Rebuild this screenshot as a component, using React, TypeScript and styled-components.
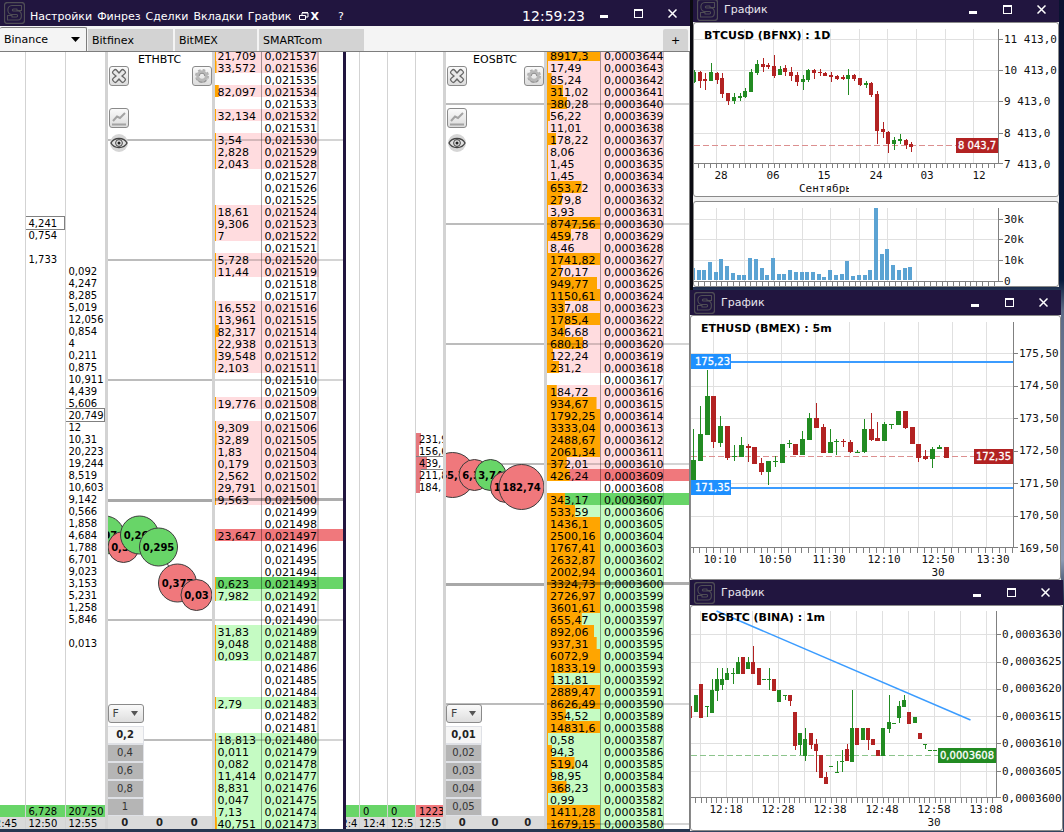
import React from "react";
import styled, { createGlobalStyle } from "styled-components";

const sans = `"DejaVu Sans", Verdana, sans-serif`;
const mono = `"DejaVu Sans Mono", monospace`;
const navy = "#21153f";
const up = "#228b22";
const down = "#b22222";

const GlobalStyle = createGlobalStyle`
  * { box-sizing: border-box; }
  body { margin: 0; background: #1d2c48; font-family: ${sans}; font-size: 11px; color: #000; }
  button, select { font: inherit; color: inherit; margin: 0; padding: 0; border: 0; background: none; }
  table { border-collapse: collapse; }
`;

/* ---------- desktop and windows ---------- */

const Desktop = styled.main`
  display: flex;
  align-items: flex-start;
  min-height: 100vh;
  overflow: hidden;
  background: linear-gradient(#0a1230 0, #071a3c 280px, #5d6b86 310px, #8e9bb4 560px, #1d2c48 600px, #33445f 830px);
`;

const MainWindow = styled.section`
  flex: 690 1 0;
  min-width: 0;
  background: #fff;
  box-shadow: 0 3px 0 #263650;
`;

const ChartColumn = styled.div`
  flex: 374 1 0;
  min-width: 0;
  display: flex;
  flex-direction: column;
  background: linear-gradient(90deg, #0b0b12 0 3px, transparent 3px);
`;

const ChartWindow = styled.section<{ $margin: string }>`
  margin: ${(p) => p.$margin};
  background: #f0f0f0;
`;

const TitleBar = styled.header<{ $height: number }>`
  display: flex;
  align-items: center;
  height: ${(p) => p.$height}px;
  padding: 0 1px 0 4px;
  background: ${navy};
  color: #e8e6ee;
  overflow: hidden;
`;

const WindowTitle = styled.h2`
  flex: 1;
  margin: 0 0 0 6px;
  font-size: 11px;
  font-weight: 400;
  line-height: 14px;
`;

const WindowButton = styled.button`
  flex: none;
  display: flex;
  align-items: center;
  justify-content: center;
  width: 34px;
  height: 22px;
`;

const Menu = styled.nav`
  flex: 1;
  display: flex;
  align-items: center;
  gap: 5px;
  margin-left: 5px;
  padding-top: 8px;
  color: #fff;
  white-space: nowrap;
`;

const MenuButton = styled.button<{ $bold?: boolean }>`
  line-height: 14px;
  font-weight: ${(p) => (p.$bold ? 700 : 400)};
`;

const MenuIcons = styled.span`
  display: flex;
  align-items: center;
  gap: 1px;
  margin: 0 14px 0 3px;
`;

const Clock = styled.time`
  margin-right: 2px;
  padding-top: 6px;
  font-size: 14px;
  line-height: 18px;
  color: #fff;
`;

function Logo() {
  return (
    <svg width="21" height="22" viewBox="0 0 21 22" fill="none" stroke="#504e56" aria-hidden="true">
      <rect x="0.5" y="0.5" width="20" height="21" rx="3" strokeWidth="1.300" />
      <path
        d="M17.5 8.5H13V7H9.5C8 7 8 9 9.500 9H14C18.500 9 18.500 18 14 18H3.500V13.500H8V15H12.500C14 15 14 12.500 12.500 12.500H8C2.500 12.500 2.500 3.500 8 3.500H17.500Z"
        strokeWidth="1.100"
        strokeLinejoin="round"
      />
    </svg>
  );
}

function WindowControls() {
  return (
    <>
      <WindowButton aria-label="Свернуть">
        <svg width="9" height="9"><rect y="6" width="8" height="3" fill="#fff" /></svg>
      </WindowButton>
      <WindowButton aria-label="Развернуть">
        <svg width="9" height="9" fill="none" stroke="#fff">
          <rect x="0.5" y="0.5" width="8" height="8" />
          <path d="M0 1.500H9" />
        </svg>
      </WindowButton>
      <WindowButton aria-label="Закрыть">
        <svg width="9" height="9" fill="none" stroke="#fff" strokeWidth="1.500">
          <path d="M0.500 0.500L8.500 8.500M8.500 0.500L0.500 8.500" />
        </svg>
      </WindowButton>
    </>
  );
}

/* ---------- exchange tabs ---------- */

const TabBar = styled.div`
  display: flex;
  align-items: flex-end;
  gap: 2px;
  height: 26px;
  padding-right: 2px;
  background: #f4f4f4;
  border-bottom: 1px solid #7d7d7d;
  line-height: 22px;
`;

const ActiveTab = styled.label`
  display: flex;
  align-items: center;
  width: 87px;
  height: 24px;
  padding: 0 6px 0 4px;
  margin-right: -1px;
  border: 1px solid #7d7d7d;
  border-width: 1px 1px 0 0;
  border-radius: 2px 2px 0 0;
`;

const TabSelect = styled.select`
  flex: 1;
  min-width: 0;
  height: 22px;
  appearance: none;
`;

const Tab = styled.button<{ $width: number }>`
  width: ${(p) => p.$width}px;
  height: 22px;
  padding: 1px 0 0 4px;
  text-align: left;
  background: #d3d3d3;
`;

const AddTab = styled.button`
  width: 25px;
  height: 22px;
  padding-top: 1px;
  margin-left: auto;
  background: #d3d3d3;
  border-radius: 2px 2px 0 0;
`;

/* ---------- trading panels ---------- */

const Panels = styled.div`
  display: flex;
  gap: 3px;
  background: ${navy};
`;

const Panel = styled.article<{ $grow: number; $columns: string; $edge?: boolean }>`
  flex: ${(p) => p.$grow} 1 0;
  min-width: 0;
  display: grid;
  grid-template-columns: ${(p) => p.$columns};
  background: #fff;
  border-right: ${(p) => (p.$edge ? "1px solid #808080" : "0")};
`;

const Clusters = styled.div`
  display: flex;
  justify-content: flex-end;
  min-width: 0;
  overflow: hidden;
  font-size: 10px;
  line-height: 14px;
`;

const ClusterColumn = styled.div<{ $width: number }>`
  flex: none;
  display: grid;
  grid-template-rows: repeat(65, 12px);
  width: ${(p) => p.$width}px;
  margin-top: -3px;
  border-left: 1px solid #d3d3d3;
  overflow: hidden;
`;

const ClusterCell = styled.div<{ $row: number; $fill?: string; $boxed?: boolean }>`
  grid-row: ${(p) => p.$row + 1};
  height: 12px;
  padding-left: 3px;
  background: ${(p) => p.$fill ?? "none"};
  box-shadow: ${(p) => (p.$boxed ? "inset -1px 0 #808080, 0 -1px #808080, 0 1px #808080" : "none")};
`;

const TickArea = styled.div`
  position: relative;
  display: flex;
  flex-direction: column;
  border: solid #d3d3d3;
  border-width: 0 3px;
  overflow: hidden;
`;

const TickCanvas = styled.svg`
  position: absolute;
  inset: 0;
  width: 100%;
  height: 100%;
`;

const TickControls = styled.div`
  position: relative;
  flex: 1;
  display: flex;
  flex-direction: column;
  align-items: flex-start;
`;

const Ticker = styled.h3`
  width: 100%;
  height: 14px;
  margin: 0;
  font-size: 11px;
  font-weight: 400;
  line-height: 16px;
  text-align: center;
`;

const ButtonRow = styled.div`
  display: flex;
  justify-content: space-between;
  width: 100%;
  padding-left: 1px;
  margin-bottom: 22px;
`;

const IconButton = styled.button`
  display: flex;
  align-items: center;
  justify-content: center;
  width: 20px;
  height: 20px;
  border: 1px solid #8a8a8a;
  border-radius: 3px;
  background: linear-gradient(#fafafa, #dcdcdc);
`;

const ChartButton = styled(IconButton)`
  margin-left: 1px;
`;

const EyeButton = styled.button`
  display: flex;
  align-items: center;
  justify-content: center;
  width: 18px;
  height: 18px;
  margin: 6px 0 auto 2px;
  border-radius: 50%;
  background: #d6d6d6;
`;

const ModePicker = styled.label`
  display: flex;
  align-items: center;
  width: 36px;
  height: 19px;
  margin-bottom: 3px;
  padding: 0 5px 0 4px;
  border: 1px solid #8a8a8a;
  border-radius: 3px;
  background: linear-gradient(#fafafa, #dedede);
  color: #444;
`;

const VolumeButton = styled.button<{ $selected?: boolean }>`
  width: 36px;
  height: 18px;
  border: solid #dfe1e6;
  border-width: 1px 1px 1px 0;
  background: ${(p) => (p.$selected ? "#f6f6f6" : "#b5b5b5")};
  color: ${(p) => (p.$selected ? "#222" : "#333")};
  font-weight: ${(p) => (p.$selected ? 700 : 400)};
  font-size: 10px;
  line-height: 16px;
`;

const Totals = styled.div`
  display: grid;
  grid-template-columns: repeat(3, 1fr);
  position: relative;
  background: #dadada;
  color: #222;
  font-size: 10px;
  font-weight: 700;
  line-height: 13px;
  text-align: center;
`;

/* ---------- order book ---------- */

const Book = styled.table`
  display: block;
  overflow: hidden;
`;

const BookBody = styled.tbody`
  display: block;
  margin-top: -3px;
`;

const lineShade = { none: "transparent", thin: "rgba(0,0,0,0.17)", thick: "rgba(0,0,0,0.32)" };

const BookRow = styled.tr<{ $columns: string; $wide?: string; $line: keyof typeof lineShade }>`
  position: relative;
  display: grid;
  grid-template-columns: ${(p) => p.$columns};
  height: 12px;
  background: ${(p) => p.$wide ?? "none"};
  &::after {
    content: "";
    position: absolute;
    left: 0;
    right: 0;
    top: ${(p) => (p.$line === "thick" ? 5 : 6)}px;
    height: ${(p) => (p.$line === "thick" ? 3 : 2)}px;
    background: ${(p) => lineShade[p.$line]};
  }
`;

const VolumeCell = styled.td<{ $fill: string }>`
  padding: 0 0 0 3px;
  border-right: 1px solid rgba(0, 0, 0, 0.35);
  background-color: ${(p) => p.$fill};
  background-image: linear-gradient(orange, orange);
  background-repeat: no-repeat;
  line-height: 16px;
  height: 12px;
`;

const PriceCell = styled.td<{ $fill: string; $edge: number }>`
  padding: 0 0 0 3px;
  border-right: ${(p) => p.$edge}px solid rgba(0, 0, 0, 0.17);
  background-color: ${(p) => p.$fill};
  line-height: 16px;
  height: 12px;
`;

type Level = string | null;

interface BookProps {
  volumes: Level[];
  price: (row: number) => string;
  ask: number;
  bid: number;
  columns: string;
  edge: number;
  round: number;
}

function OrderBook({ volumes, price, ask, bid, columns, edge, round }: BookProps) {
  return (
    <Book>
      <BookBody>
        {volumes.map((volume, row) => {
          const label = price(row);
          const wide = row === ask ? "#f0787c" : row === bid ? "#68d568" : undefined;
          const fill = wide || !volume ? "transparent" : row < ask ? "#ffdcdf" : "#c5fbc3";
          const amount = volume ? parseFloat(volume.replace(",", ".")) : 0;
          const share = Math.min(100, amount / 10);
          const line = row === round ? "thick" : label.endsWith("0") ? "thin" : "none";
          return (
            <BookRow key={label} $columns={columns} $wide={wide} $line={line}>
              <VolumeCell $fill={fill} style={{ backgroundSize: volume ? `max(1px, ${share}%) 100%` : "0 0" }}>
                {volume}
              </VolumeCell>
              <PriceCell $fill={fill} $edge={edge}>{label}</PriceCell>
            </BookRow>
          );
        })}
      </BookBody>
    </Book>
  );
}

const _ = null;
const ethVolumes: Level[] = [
  "21,709", "33,572", _, "82,097", _, "32,134", _, "3,54", "2,828", "2,043", _, _, _, "18,61", "9,306", "7", _,
  "5,728", "11,44", _, _, "16,552", "13,961", "82,317", "22,938", "39,548", "2,103", _, _, "19,776", _, "9,309",
  "32,89", "1,83", "0,179", "2,562", "29,791", "9,563", _, _, "23,647", _, _, _, "0,623", "7,982", _, _, "31,83",
  "9,048", "0,093", _, _, _, "2,79", _, _, "18,813", "0,011", "0,082", "11,414", "8,831", "0,047", "7,13", "40,751",
];
const eosVolumes: Level[] = [
  "8917,3", "17,49", "85,24", "311,02", "380,28", "56,22", "11,01", "178,22", "8,06", "1,45", "1,45", "653,72",
  "279,8", "3,93", "8747,56", "459,78", "8,46", "1741,82", "270,17", "949,77", "1150,61", "337,08", "1785,4",
  "346,68", "680,18", "122,24", "231,2", _, "184,72", "934,67", "1792,25", "3333,04", "2488,67", "2061,34",
  "372,01", "426,24", _, "343,17", "533,59", "1436,1", "2500,16", "1767,41", "2632,87", "2002,94", "3324,73",
  "2726,97", "3601,61", "655,47", "892,06", "937,31", "6072,9", "1833,19", "131,81", "2889,47", "8626,49",
  "354,52", "14831,6", "0,58", "94,3", "519,04", "98,95", "368,23", "0,99", "1411,28", "1679,15",
];

interface Cluster {
  row: number;
  text: string;
  fill?: string;
  boxed?: boolean;
}

const lastCluster: Cluster[] = [
  "0,092", "4,247", "8,285", "5,019", "12,056", "0,854", "4", "0,211", "0,875", "10,911", "4,439", "5,606", "20,749",
  "12", "10,31", "20,223", "19,244", "8,519", "10,603", "9,142", "0,566", "1,858", "4,684", "1,788", "6,701",
  "9,023", "3,153", "5,231", "1,258", "5,846", "", "0,013",
].map((text, i) => ({ row: 18 + i, text, boxed: text === "20,749" }));

const green = "#68d568";
const red = "#f0787c";
const foot = (sum: string, time: string, fill = green): Cluster[] => [
  { row: 63, text: sum, fill },
  { row: 64, text: time, fill: "#dadada" },
];
const redBar = (width: number) => `linear-gradient(90deg, #e5797f ${width}px, transparent ${width}px)`;

const ethClusters: Cluster[][] = [
  foot("", "12:45"),
  [
    { row: 14, text: "4,241", boxed: true },
    { row: 15, text: "0,754" },
    { row: 17, text: "1,733" },
    ...foot("6,728", "12:50"),
  ],
  [...lastCluster, ...foot("207,50", "12:55")],
];
const eosClusters: Cluster[][] = [
  foot("", "12:4"),
  foot("0", "12:4"),
  foot("0", "12:5"),
  [
    { row: 32, text: "231,9", fill: redBar(5) },
    { row: 33, text: "156,6", fill: redBar(3) },
    { row: 34, text: "439,", fill: redBar(11), boxed: true },
    { row: 35, text: "211,8", fill: redBar(5) },
    { row: 36, text: "184,", fill: redBar(4) },
    ...foot("1223", "12:5", red),
  ],
];

interface Trade {
  x: number;
  y: number;
  r: number;
  fill: string;
  text: string;
}

const ethTrades: Trade[] = [
  { x: -3, y: 483, r: 19, fill: green, text: "0,97" },
  { x: 15.5, y: 495, r: 15.5, fill: red, text: "0,37" },
  { x: 31.5, y: 483, r: 19, fill: green, text: "0,265" },
  { x: 50.5, y: 495, r: 19, fill: green, text: "0,295" },
  { x: 69.500, y: 531, r: 19, fill: red, text: "0,377" },
  { x: 88.5, y: 543, r: 15.5, fill: red, text: "0,03" },
];
const eosTrades: Trade[] = [
  { x: 6.5, y: 423, r: 22.5, fill: red, text: "155,74" },
  { x: 28.5, y: 423, r: 15.5, fill: red, text: "6,38" },
  { x: 44.500, y: 423, r: 15.5, fill: green, text: "3,74" },
  { x: 60, y: 435, r: 15.5, fill: red, text: "1,14" },
  { x: 75.5, y: 435, r: 22.5, fill: red, text: "182,74" },
];

interface TradingPanelProps {
  ticker: string;
  grow: number;
  columns: string;
  edge?: boolean;
  clusterWidth: number;
  clusters: Cluster[][];
  trades: Trade[];
  lines: number[];
  thick: number;
  sizes: string[];
  book: BookProps;
}

function TradingPanel(p: TradingPanelProps) {
  return (
    <Panel $grow={p.grow} $columns={p.columns} $edge={p.edge}>
      <Clusters>
        {p.clusters.map((cells, i) => (
          <ClusterColumn key={i} $width={p.clusterWidth}>
            {cells.map((c) => (
              <ClusterCell key={c.row} $row={c.row} $fill={c.fill} $boxed={c.boxed}>{c.text}</ClusterCell>
            ))}
          </ClusterColumn>
        ))}
      </Clusters>
      <TickArea>
        <TickCanvas>
          {p.lines.map((y) => (
            <line key={y} x1="0" x2="100%" y1={y} y2={y} stroke="#bcbcbc" strokeWidth="2" />
          ))}
          <line x1="0" x2="100%" y1={p.thick} y2={p.thick} stroke="#a8a8a8" strokeWidth="3" />
          <polyline points={p.trades.map((t) => `${t.x},${t.y}`).join(" ")} fill="none" stroke="#444" />
          {p.trades.map((t) => (
            <g key={t.x}>
              <circle cx={t.x} cy={t.y} r={t.r} fill={t.fill} stroke="#3c3c3c" />
              <text x={t.x} y={t.y + 4} textAnchor="middle" fontSize="10" fontWeight="700">{t.text}</text>
            </g>
          ))}
        </TickCanvas>
        <TickControls>
          <Ticker>{p.ticker}</Ticker>
          <ButtonRow>
            <IconButton aria-label="Закрыть инструмент">
              <svg width="16" height="16" viewBox="0 0 16 16" fill="#e9e9e9" stroke="#666" strokeWidth="1.300">
                <path d="M4.500 1.500C5.500 1.500 7 4 8 5C9 4 10.500 1.500 11.500 1.500S14.500 3.500 14.500 4.500S12 7 11 8C12 9 14.500 10.500 14.500 11.500S12.500 14.500 11.500 14.500S9 12 8 11C7 12 5.500 14.500 4.500 14.500S1.500 12.500 1.500 11.500S4 9 5 8C4 7 1.500 5.500 1.500 4.500S3.500 1.500 4.500 1.500Z" />
              </svg>
            </IconButton>
            <IconButton aria-label="Параметры">
              <svg width="16" height="16" viewBox="0 0 16 16" fill="none" stroke="#b0b0b0">
                <circle cx="8" cy="8" r="6" strokeWidth="2" strokeDasharray="2.600 2.110" />
                <circle cx="8" cy="8" r="4.300" strokeWidth="3" stroke="#b8b8b8" />
                <path d="M5.200 8A2.800 2.800 0 0 1 10.800 8" stroke="#8d8d8d" />
                <path d="M3 11.500A6 6 0 0 0 13 11.500" stroke="#8d8d8d" />
              </svg>
            </IconButton>
          </ButtonRow>
          <ChartButton aria-label="Открыть график">
            <svg width="16" height="16" viewBox="0 0 16 16" fill="none" stroke="#a3a3a3">
              <path d="M2 11L6 6.500L9 8L14 3" strokeWidth="2" />
              <path d="M1 14.500H15" strokeWidth="2" />
            </svg>
          </ChartButton>
          <EyeButton aria-label="Показать сделки">
            <svg width="18" height="12" viewBox="0 0 18 12" fill="none" stroke="#444">
              <path d="M1 6C4 0 14 0 17 6C14 12 4 12 1 6Z" strokeWidth="1.300" fill="#e0e0e0" />
              <circle cx="9" cy="6" r="3.400" strokeWidth="1" />
              <circle cx="9" cy="6" r="1.500" fill="#222" stroke="none" />
            </svg>
          </EyeButton>
          <ModePicker>
            <TabSelect aria-label="Режим">
              <option>F</option>
            </TabSelect>
            <svg width="7" height="5"><path d="M0 0H7L3.500 5Z" fill="#555" /></svg>
          </ModePicker>
          {p.sizes.map((size, i) => (
            <VolumeButton key={size} $selected={i === 0}>{size}</VolumeButton>
          ))}
        </TickControls>
        <Totals>
          <span>0</span>
          <span>0</span>
          <span>0</span>
        </Totals>
      </TickArea>
      <OrderBook {...p.book} />
    </Panel>
  );
}

/* ---------- charts ---------- */

const ChartPanel = styled.div<{ $gap?: number }>`
  margin-top: ${(p) => p.$gap ?? 0}px;
  border: 1px solid #8a8a8a;
  border-radius: 3px;
  background: #fff;
`;

const Plot = styled.svg`
  display: block;
  width: 100%;
  height: auto;
`;

/* Plot data is kept in thirds of a pixel; px() snaps it to the pixel grid. */
const px = (n: number) => Math.round(n / 3);

/* centre, high, body top, body bottom, low, direction */
type Candle = [number, number, number, number, number, 0 | 1];

function Candles({ data, width }: { data: Candle[]; width: number }) {
  return (
    <g shapeRendering="crispEdges">
      {data.map(([c, hi, top, bottom, lo, rising]) => {
        const x = Math.round((c - 1.5) / 3);
        return (
          <g key={c} fill={rising ? up : down}>
            <rect x={x} y={px(hi)} width="1" height={Math.max(1, px(lo) - px(hi))} />
            <rect x={x - 2} y={px(top)} width={width} height={Math.max(1, px(bottom) - px(top))} />
          </g>
        );
      })}
    </g>
  );
}

interface GridProps {
  xs: number[];
  ys: number[];
  left: number;
  right: number;
  top: number;
  bottom: number;
  pitch: number;
  first: number;
}

function Grid({ xs, ys, left, right, top, bottom, pitch, first }: GridProps) {
  const ticks: number[] = [];
  for (let x = first; x < right; x += pitch) ticks.push(px(x));
  return (
    <g shapeRendering="crispEdges">
      <g fill="#e0e0e0">
        {xs.map((x) => <rect key={x} x={px(x - 1)} y={px(top)} width="1" height={px(bottom) - px(top)} />)}
        {ys.map((y) => <rect key={y} x={px(left)} y={px(y - 1)} width={px(right) - px(left)} height="1" />)}
      </g>
      <g fill="#808080">
        <rect x={px(right - 1)} y={px(top)} width="1" height={px(bottom) - px(top)} />
        <rect x={px(left)} y={px(bottom - 1)} width={px(right) - px(left) + 5} height="1" />
        {ys.map((y) => <rect key={y} x={px(right)} y={px(y - 1)} width="5" height="1" />)}
        {ticks.map((x) => <rect key={x} x={x} y={px(bottom)} width="1" height="5" />)}
      </g>
    </g>
  );
}

type Label = [number, number, string];

function Labels({ items, anchor }: { items: Label[]; anchor: "start" | "middle" }) {
  return (
    <g fontFamily={mono} fontSize="11" textAnchor={anchor} fill="#111">
      {items.map(([x, y, text]) => <text key={text} x={px(x)} y={px(y) + 4}>{text}</text>)}
    </g>
  );
}

interface TagProps {
  x: number;
  y: number;
  width: number;
  fill: string;
  pad: number;
  text: string;
}

function Tag({ x, y, width, fill, pad, text }: TagProps) {
  return (
    <g>
      <rect x={px(x)} y={px(y)} width={px(width)} height="15" fill={fill} />
      <text x={px(x + pad)} y={px(y) + 11} fontSize="10" fill="#fff" stroke="#fff" strokeWidth="0.300">{text}</text>
    </g>
  );
}

function PlotTitle({ x, y, text }: { x: number; y: number; text: string }) {
  return <text x={x} y={y} fontSize="11" fontWeight="700">{text}</text>;
}

const btcCandles: Candle[] = [
  [19, 210, 216, 247, 249, 1], [37, 213, 216, 243, 264, 0], [52, 219, 237, 243, 270, 0], [70, 189, 216, 243, 243, 1],
  [87, 216, 219, 240, 252, 0], [102, 219, 233, 282, 294, 0], [121, 279, 279, 303, 315, 0], [139, 279, 291, 303, 312, 1],
  [157, 279, 288, 294, 303, 1], [172, 264, 273, 291, 294, 1], [189, 207, 216, 276, 276, 1], [208, 180, 192, 219, 224, 1],
  [226, 174, 192, 201, 216, 0], [240, 189, 195, 201, 207, 0], [258, 165, 198, 228, 234, 0], [277, 198, 207, 225, 225, 1],
  [291, 195, 204, 216, 228, 0], [309, 201, 216, 228, 243, 0], [328, 216, 225, 246, 258, 0], [346, 225, 237, 246, 270, 1],
  [361, 207, 210, 240, 246, 1], [378, 207, 210, 219, 237, 0], [397, 207, 216, 219, 228, 0], [411, 216, 219, 228, 228, 0],
  [430, 216, 225, 231, 246, 0], [447, 225, 228, 237, 240, 0], [466, 225, 231, 237, 240, 0], [481, 207, 225, 237, 286, 1],
  [499, 222, 225, 237, 243, 0], [516, 234, 234, 255, 258, 0], [535, 243, 249, 255, 264, 1], [549, 246, 249, 285, 291, 0],
  [568, 273, 282, 393, 432, 0], [586, 366, 387, 396, 414, 0], [601, 393, 396, 432, 459, 0], [619, 411, 420, 432, 450, 1],
  [637, 402, 417, 423, 433, 1], [655, 417, 420, 435, 447, 0], [670, 426, 432, 441, 455, 0],
];

/* bar centre, bar top */
const btcVolume: [number, number][] = [
  [15, 384], [33, 390], [48, 390], [66, 366], [84, 396], [99, 357], [117, 378], [135, 399], [153, 405], [168, 405],
  [186, 354], [204, 357], [222, 384], [237, 405], [255, 354], [273, 402], [288, 402], [306, 390], [324, 396],
  [342, 396], [357, 396], [375, 396], [393, 402], [408, 411], [426, 390], [444, 405], [462, 402], [477, 363],
  [495, 408], [513, 405], [530, 405], [546, 390], [564, 204], [582, 342], [597, 327], [615, 375], [633, 390],
  [651, 384], [666, 381],
];

const ethCandles: Candle[] = [
  [16, 429, 522, 582, 582, 1], [37, 360, 444, 525, 525, 1], [58, 252, 330, 447, 447, 1], [76, 330, 330, 468, 486, 0],
  [97, 390, 420, 471, 483, 1], [118, 420, 420, 516, 522, 0], [139, 477, 510, 513, 525, 1], [160, 453, 477, 513, 513, 1],
  [181, 475, 480, 485, 528, 0], [199, 483, 483, 534, 534, 0], [220, 516, 531, 558, 567, 0], [241, 525, 525, 558, 597, 1],
  [262, 510, 524, 527, 543, 1], [283, 474, 474, 531, 531, 1], [304, 462, 471, 474, 486, 1], [322, 474, 474, 507, 507, 0],
  [343, 435, 459, 507, 507, 1], [364, 381, 396, 462, 462, 1], [385, 351, 396, 426, 426, 0], [406, 414, 423, 501, 501, 0],
  [427, 429, 468, 501, 501, 1], [445, 459, 465, 468, 507, 1], [466, 459, 465, 468, 483, 0], [487, 462, 468, 498, 501, 0],
  [508, 492, 498, 501, 501, 1], [529, 399, 429, 498, 501, 1], [550, 381, 429, 462, 465, 0], [568, 408, 456, 465, 465, 0],
  [589, 408, 414, 465, 465, 1], [610, 414, 414, 417, 429, 1], [631, 375, 375, 417, 417, 1], [652, 375, 375, 426, 429, 0],
  [673, 423, 423, 474, 474, 0], [691, 474, 474, 516, 528, 0], [712, 492, 510, 519, 522, 0], [733, 483, 489, 519, 546, 1],
  [754, 477, 483, 489, 489, 1], [775, 483, 483, 516, 516, 0],
];

const eosCandles: Candle[] = [
  [8, 318, 318, 354, 354, 0], [24, 285, 285, 336, 336, 1], [39, 252, 252, 354, 354, 0], [57, 318, 318, 321, 351, 1],
  [72, 237, 270, 339, 339, 1], [88, 204, 237, 273, 303, 1], [102, 204, 237, 255, 270, 1], [117, 204, 219, 240, 240, 1],
  [136, 204, 218, 221, 252, 1], [151, 171, 186, 222, 222, 1], [165, 171, 171, 222, 222, 0], [180, 171, 186, 207, 207, 1],
  [195, 138, 186, 222, 222, 0], [213, 204, 204, 255, 255, 0], [228, 237, 237, 240, 240, 1], [244, 204, 237, 240, 270, 1],
  [258, 237, 237, 273, 273, 0], [273, 270, 270, 306, 306, 1], [291, 285, 285, 288, 300, 1], [306, 285, 285, 303, 318, 0],
  [321, 336, 336, 438, 450, 0], [336, 399, 399, 435, 465, 1], [351, 384, 417, 468, 483, 1], [369, 399, 399, 435, 447, 0],
  [384, 417, 432, 453, 516, 0], [399, 465, 465, 534, 534, 0], [414, 516, 531, 552, 552, 0], [429, 498, 498, 501, 501, 1],
  [447, 483, 516, 519, 519, 1], [463, 450, 483, 486, 516, 1], [477, 432, 447, 483, 483, 0], [492, 270, 384, 486, 486, 1],
  [507, 384, 384, 435, 435, 0], [525, 384, 384, 420, 420, 1], [540, 384, 384, 420, 450, 0], [555, 417, 417, 435, 435, 0],
  [570, 450, 450, 468, 468, 0], [585, 384, 384, 468, 468, 1], [603, 285, 366, 387, 399, 1], [618, 370, 370, 373, 373, 1],
  [633, 303, 318, 354, 369, 1], [648, 285, 300, 321, 321, 1], [663, 336, 336, 372, 372, 0], [681, 351, 351, 369, 369, 1],
  [696, 399, 399, 417, 417, 0], [711, 432, 432, 435, 447, 1], [727, 450, 450, 453, 453, 1], [741, 450, 450, 453, 453, 1],
];

const btcXs = [85, 169, 256, 343, 427, 514, 598, 685, 772, 856];

function BtcChart() {
  return (
    <Plot viewBox="6 23 364 173" role="img" aria-label="BTCUSD">
      <Grid xs={btcXs} ys={[118, 211, 304, 400]} left={18} right={931} top={87} bottom={490} pitch={17.370} first={31} />
      <path d="M6 145.500H268" stroke="#dc8f8f" strokeDasharray="6 3" />
      <Candles data={btcCandles} width={4} />
      <Labels
        anchor="start"
        items={[[948, 118, "11 413,0"], [948, 211, "10 413,0"], [948, 304, "9 413,0"], [948, 398, "8 413,0"], [948, 492, "7 413,0"]]}
      />
      <Labels
        anchor="middle"
        items={[[99, 525, "28"], [255, 525, "06"], [408, 525, "15"], [564, 525, "24"], [717, 525, "03"], [873, 525, "12"]]}
      />
      <clipPath id="month"><rect x="110" y="178" width="51" height="18" /></clipPath>
      <g clipPath="url(#month)">
        <Labels anchor="start" items={[[333, 564, "Сентябрь"]]} />
      </g>
      <Tag x={804} y={414} width={126} pad={5} fill={down} text="8 043,7" />
      <PlotTitle x={16} y={39} text="BTCUSD (BFNX) : 1D" />
    </Plot>
  );
}

function BtcVolumeChart() {
  return (
    <Plot viewBox="6 62 364 84" role="img" aria-label="Объём">
      <Grid xs={btcXs} ys={[238, 298, 361]} left={18} right={931} top={204} bottom={423} pitch={17.370} first={31} />
      <g fill="#5ba3d3" shapeRendering="crispEdges">
        {btcVolume.map(([x, top]) => (
          <rect key={x} x={px(x) - 2} y={px(top)} width="4" height={140 - px(top)} />
        ))}
      </g>
      <Labels anchor="start" items={[[948, 236, "30k"], [948, 298, "20k"], [948, 361, "10k"], [948, 424, "0"]]} />
    </Plot>
  );
}

function EthChart() {
  return (
    <Plot viewBox="3 30 369 263" role="img" aria-label="ETHUSD">
      <Grid
        xs={[76, 178, 280, 382, 484, 589, 691, 793, 895]}
        ys={[202, 301, 397, 495, 592, 690]}
        left={9} right={976} top={108} bottom={785} pitch={20.400} first={14}
      />
      <path d="M3 170.500H286" stroke="#dc8f8f" strokeDasharray="6 3" />
      <Candles data={ethCandles} width={5} />
      <path d="M43 76H325M43 202H325" stroke="#3b9cff" strokeWidth="2" />
      <Labels
        anchor="start"
        items={[[993, 202, "175,50"], [993, 298, "174,50"], [993, 397, "173,50"], [993, 493, "172,50"], [993, 590, "171,50"], [993, 687, "170,50"], [993, 787, "169,50"]]}
      />
      <Labels
        anchor="middle"
        items={[[97, 820, "10:10"], [260, 820, "10:50"], [424, 820, "11:30"], [589, 820, "12:10"], [751, 820, "12:50"], [916, 820, "13:30"], [751, 859, "30"]]}
      />
      <Tag x={6} y={205} width={123} pad={15} fill="#1e90ff" text="175,23" />
      <Tag x={6} y={583} width={123} pad={15} fill="#1e90ff" text="171,35" />
      <Tag x={858} y={490} width={118} pad={7} fill={down} text="172,35" />
      <PlotTitle x={13} y={46} text="ETHUSD (BMEX) : 5m" />
    </Plot>
  );
}

function EosChart() {
  return (
    <Plot viewBox="3 6 371 224" role="img" aria-label="EOSBTC">
      <Grid
        xs={[37, 115, 193, 271, 349, 427, 505, 583, 661, 739, 817, 895]}
        ys={[103, 187, 268, 349, 430, 514]}
        left={9} right={925} top={33} bottom={593} pitch={15.600} first={22}
      />
      <path d="M3 155.500H250" stroke="#8cc48c" strokeDasharray="6 3" />
      <Candles data={eosCandles} width={4} />
      <path d="M28.500 11L282.500 120" stroke="#3b9cff" strokeWidth="1.500" />
      <Labels
        anchor="start"
        items={[[942, 103, "0,0003630"], [942, 184, "0,0003625"], [942, 265, "0,0003620"], [942, 347, "0,0003615"], [942, 430, "0,0003610"], [942, 513, "0,0003605"], [942, 595, "0,0003600"]]}
      />
      <Labels
        anchor="middle"
        items={[[115, 627, "12:18"], [271, 627, "12:28"], [427, 627, "12:38"], [583, 627, "12:48"], [739, 627, "12:58"], [895, 627, "13:08"], [739, 666, "30"]]}
      />
      <Tag x={750} y={444} width={174} pad={5} fill={up} text="0,0003608" />
      <PlotTitle x={13} y={21} text="EOSBTC (BINA) : 1m" />
    </Plot>
  );
}

function ChartTitleBar() {
  return (
    <TitleBar $height={25}>
      <Logo />
      <WindowTitle>График</WindowTitle>
      <WindowControls />
    </TitleBar>
  );
}

/* ---------- page ---------- */

export default function App() {
  return (
    <Desktop>
      <GlobalStyle />
      <MainWindow>
        <TitleBar $height={26}>
          <Logo />
          <Menu>
            <MenuButton>Настройки</MenuButton>
            <MenuButton>Финрез</MenuButton>
            <MenuButton>Сделки</MenuButton>
            <MenuButton>Вкладки</MenuButton>
            <MenuButton>График</MenuButton>
            <MenuIcons>
              <MenuButton aria-label="Окна">
                <svg width="10" height="8" viewBox="0 0 10 8" fill="none" stroke="#fff">
                  <path d="M3 3V1H9V5H6.500M3 0.500H9" />
                  <path d="M0.500 3.500H6.500V7.500H0.500ZM0.500 3.500V7" />
                </svg>
              </MenuButton>
              <MenuButton $bold>X</MenuButton>
            </MenuIcons>
            <MenuButton>?</MenuButton>
          </Menu>
          <Clock>12:59:23</Clock>
          <WindowControls />
        </TitleBar>
        <TabBar>
          <ActiveTab>
            <TabSelect aria-label="Биржа">
              <option>Binance</option>
            </TabSelect>
            <svg width="9" height="5"><path d="M0 0H9L4.500 5Z" /></svg>
          </ActiveTab>
          <Tab $width={85}>Bitfinex</Tab>
          <Tab $width={82}>BitMEX</Tab>
          <Tab $width={105}>SMARTcom</Tab>
          <AddTab aria-label="Добавить вкладку">+</AddTab>
        </TabBar>
        <Panels>
          <TradingPanel
            ticker="ETHBTC"
            grow={343}
            columns="minmax(0, 1fr) 110px 128px"
            clusterWidth={40}
            clusters={ethClusters}
            trades={ethTrades}
            lines={[88, 208, 328, 568, 688]}
            thick={448.5}
            sizes={["0,2", "0,4", "0,6", "0,8", "1"]}
            book={{
              volumes: ethVolumes,
              price: (row) => `0,0${21537 - row}`,
              ask: 40,
              bid: 44,
              columns: "47px 57px",
              edge: 2,
              round: 37,
            }}
          />
          <TradingPanel
            ticker="EOSBTC"
            grow={344}
            columns="minmax(0, 1fr) 104px 142px"
            edge
            clusterWidth={28}
            clusters={eosClusters}
            trades={eosTrades}
            lines={[52, 172, 292, 412, 652]}
            thick={532.5}
            sizes={["0,01", "0,02", "0,03", "0,04", "0,05"]}
            book={{
              volumes: eosVolumes,
              price: (row) => `0,000${3644 - row}`,
              ask: 35,
              bid: 37,
              columns: "54px 63px",
              edge: 1,
              round: 44,
            }}
          />
        </Panels>
      </MainWindow>
      <ChartColumn>
        <ChartWindow $margin="-3px 5px 3px 3px">
          <ChartTitleBar />
          <ChartPanel><BtcChart /></ChartPanel>
          <ChartPanel $gap={4}><BtcVolumeChart /></ChartPanel>
        </ChartWindow>
        <ChartWindow $margin="0 3px 0 0">
          <ChartTitleBar />
          <ChartPanel><EthChart /></ChartPanel>
        </ChartWindow>
        <ChartWindow $margin="0 1px 0 0">
          <ChartTitleBar />
          <ChartPanel><EosChart /></ChartPanel>
        </ChartWindow>
      </ChartColumn>
    </Desktop>
  );
}
